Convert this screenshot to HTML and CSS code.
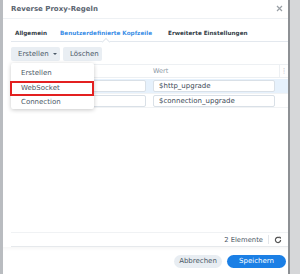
FILE: index.html
```html
<!DOCTYPE html>
<html lang="de">
<head>
<meta charset="utf-8">
<link rel="stylesheet" href="styles.css">
</head>
<body>
<div class="screen">
  <div class="edge-left"></div>
  <div class="dialog">
    <div class="header">
      <span class="title">Reverse Proxy-Regeln</span>
      <svg class="close" width="7" height="7" viewBox="0 0 7 7"><path d="M1 1L6 6M6 1L1 6" stroke="#9aa0a6" stroke-width="1.2"/></svg>
    </div>
    <div class="tabs">
      <span class="tab">Allgemein</span>
      <span class="tab active">Benutzerdefinierte Kopfzeile</span>
      <span class="tab">Erweiterte Einstellungen</span>
    </div>
    <div class="toolbar">
      <button class="btn">Erstellen <span class="caret"></span></button>
      <button class="btn">Löschen</button>
    </div>
    <div class="table">
      <div class="thead">
        <div class="col-name"></div>
        <div class="col-value">Wert</div>
        <div class="col-more">&#8942;</div>
      </div>
      <div class="row selected">
        <div class="col-name"><div class="input"></div></div>
        <div class="col-value"><div class="input">$http_upgrade</div></div>
        <div class="col-more"></div>
      </div>
      <div class="row">
        <div class="col-name"><div class="input"></div></div>
        <div class="col-value"><div class="input">$connection_upgrade</div></div>
        <div class="col-more"></div>
      </div>
      <div class="menu">
        <div class="menu-item">Erstellen</div>
        <div class="menu-item">WebSocket</div>
        <div class="menu-item">Connection</div>
      </div>
      <div class="highlight"></div>
    </div>
    <div class="tfoot">
      <span class="count">2 Elemente</span>
      <span class="sep"></span>
      <svg class="refresh" width="8" height="8" viewBox="0 0 8 8"><path d="M6.6 4A2.6 2.6 0 1 1 5.6 1.9" fill="none" stroke="#555" stroke-width="1.2"/><path d="M4.6 0.6L7 0.9L6.5 3.2Z" fill="#555"/></svg>
    </div>
    <div class="actions">
      <button class="pill cancel">Abbrechen</button>
      <button class="pill save">Speichern</button>
    </div>
  </div>
  <div class="edge-right"></div>
</div>
</body>
</html>
```
FILE: styles.css
```css
* { box-sizing: border-box; }
html, body { margin: 0; padding: 0; }
body {
  width: 300px;
  height: 274px;
  overflow: hidden;
  font-family: "DejaVu Sans", Verdana, sans-serif;
  font-size: 7px;
  color: #3b4a5a;
}
.screen { display: flex; height: 274px; }
.edge-left { width: 3px; flex: none; background: #b9bcc0; }
.edge-right { width: 12px; flex: none; background: linear-gradient(to right, #8d9094 0, #8d9094 2px, #d6d7d9 2px); }
.dialog {
  width: 285px;
  flex: none;
  background: #fff;
  display: flex;
  flex-direction: column;
}
.header {
  height: 19px;
  flex: none;
  display: flex;
  align-items: center;
  justify-content: space-between;
  padding: 0 5px 1px 8px;
  border-bottom: 1px solid #eef1f4;
}
.title { font-weight: bold; color: #5a6470; font-size: 7px; }
.tabs {
  position: relative;
  height: 23px;
  flex: none;
  display: flex;
  align-items: flex-end;
  padding: 0 0 5px 4px;
  margin-left: 8px;
  border-bottom: 1px solid #e3e8ee;
}
.tab { font-weight: bold; font-size: 5.7px; color: #333d48; white-space: nowrap; }
.tab + .tab { margin-left: 13px; }
.tab:last-child { margin-left: 16px; }
.tab.active { color: #3a8ee6; position: relative; }
.tab.active::after {
  content: "";
  position: absolute;
  left: 50%;
  bottom: -9px;
  width: 5px;
  height: 5px;
  margin-left: -3px;
  background: #fff;
  border-left: 1px solid #e3e8ee;
  border-top: 1px solid #e3e8ee;
  transform: rotate(45deg);
}
.toolbar {
  display: flex;
  flex: none;
  gap: 3px;
  padding: 5px 8px 0;
}
.btn {
  height: 14px;
  border: 0;
  border-radius: 2px;
  background: #e9eef3;
  font-family: inherit;
  font-size: 7px;
  color: #4b5866;
  padding: 0 7px;
  display: flex;
  align-items: center;
  gap: 4px;
}
.btn:first-child { width: 49px; }
.btn:last-child { width: 39px; }
.caret {
  width: 0; height: 0;
  border-left: 2px solid transparent;
  border-right: 2px solid transparent;
  border-top: 2px solid #4b5866;
}
.table {
  position: relative;
  flex: 1;
  margin: 3px 0 0 8px;
}
.thead, .row { display: flex; }
.thead {
  height: 14px;
  align-items: center;
  border-top: 1px solid #edf0f3;
  border-bottom: 1px solid #edf0f3;
  color: #8a96a3;
  font-size: 6.5px;
  margin-bottom: 1px;
}
.col-name { width: 139px; flex: none; padding: 0 4px; }
.col-value { width: 129px; flex: none; padding: 0 0 0 3px; }
.col-more { width: 9px; flex: none; color: #a0a8b0; border-left: 1px solid #edf0f3; height: 100%; display: flex; align-items: center; justify-content: center; }
.row { height: 14px; align-items: center; border-bottom: 1px solid #f1f3f5; }
.row .col-more { border-left: 0; }
.row.selected { background: #e6f1fc; height: 15px; }
.input {
  height: 12px;
  border: 1px solid #d9e0e7;
  border-radius: 2px;
  background: #fff;
  padding: 0 5px;
  display: flex;
  align-items: center;
  color: #3d4a57;
  font-size: 7px;
}
.col-value .input { width: 122px; }
.menu {
  position: absolute;
  left: 0;
  top: -1px;
  width: 83px;
  height: 46px;
  background: #fff;
  border-radius: 2px;
  box-shadow: 0 1px 4px rgba(0,0,0,0.22);
  padding-top: 3px;
  color: #4b5866;
}
.menu-item { height: 14.5px; display: flex; align-items: center; padding-left: 10px; }
.highlight {
  position: absolute;
  left: -1px;
  top: 17px;
  width: 84px;
  height: 15px;
  border: 2px solid #e32020;
}
.tfoot {
  height: 15px;
  flex: none;
  margin-left: 8px;
  border-top: 1px solid #f0f2f4;
  border-bottom: 1px solid #e6e9ec;
  display: flex;
  align-items: center;
  justify-content: flex-end;
  padding-right: 6px;
  color: #4b5866;
  font-size: 6.8px;
}
.sep { width: 1px; height: 9px; background: #e3e6ea; margin: 0 5px 0 5px; }
.actions {
  height: 27px;
  flex: none;
  display: flex;
  justify-content: flex-end;
  align-items: center;
  gap: 5px;
  padding: 1px 2px 0 0;
  box-shadow: inset 0 5px 4px -4px rgba(0,0,0,0.05);
}
.pill {
  height: 13px;
  border: 0;
  border-radius: 7px;
  font-family: inherit;
  font-size: 7px;
  padding: 0;
}
.cancel { width: 48px; background: #e8edf2; color: #4b5866; }
.save { width: 59px; background: #1b7fe5; color: #fff; }
```
